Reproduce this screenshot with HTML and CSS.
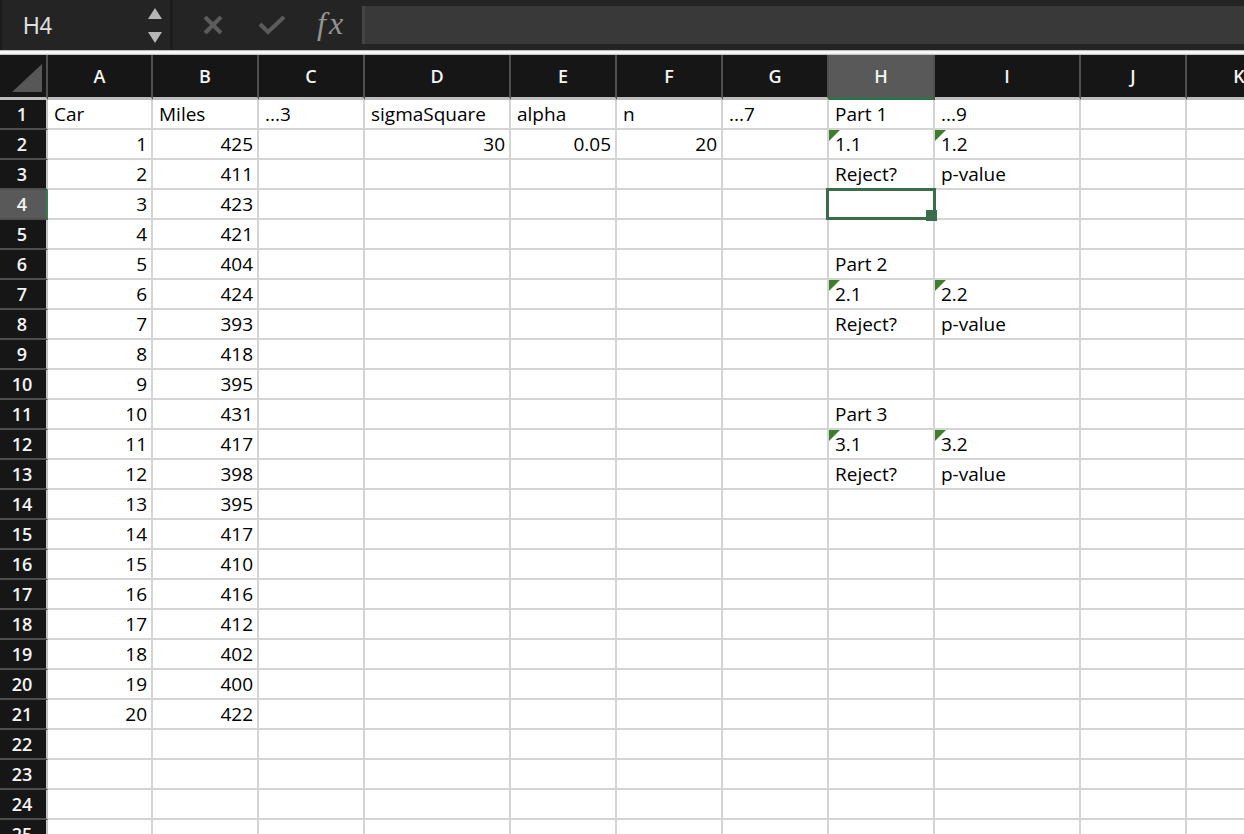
FILE: index.html
```html
<!DOCTYPE html>
<html lang="en">
<head>
<meta charset="UTF-8" />
<meta name="viewport" content="width=device-width, initial-scale=1" />
<title>Sheet1</title>
<link rel="stylesheet" href="styles.css">
</head>
<body>

<div class="toolbar">
  <div class="namebox">
    <span class="cellref">H4</span>
    <svg class="spinner" width="14" height="36" viewBox="0 0 14 36">
      <polygon points="0,11 7,0 14,11" />
      <polygon points="0,24 14,24 7,35" />
    </svg>
  </div>
  <div class="formula-tools">
    <svg class="tool-cancel" width="20" height="20" viewBox="0 0 20 20">
      <path d="M2 2 L18 18 M18 2 L2 18" />
    </svg>
    <svg class="tool-enter" width="28" height="20" viewBox="0 0 28 20">
      <path d="M2 9 L10 17 L26 2" />
    </svg>
    <span class="fx">fx</span>
  </div>
  <div class="formula-input"></div>
</div>
<div class="divider"></div>

<div class="sheet" id="sheet"></div>

<script>
  const sheet = document.getElementById('sheet');
  const cols = ['A', 'B', 'C', 'D', 'E', 'F', 'G', 'H', 'I', 'J', 'K'];
  const miles = [425, 411, 423, 421, 404, 424, 393, 418, 395, 431, 417, 398, 395, 417, 410, 416, 412, 402, 400, 422];

  const cells = {
    A1: 'Car', B1: 'Miles', C1: '...3', D1: 'sigmaSquare', E1: 'alpha', F1: 'n', G1: '...7', H1: 'Part 1', I1: '...9',
    D2: 30, E2: 0.05, F2: 20, H2: '1.1', I2: '1.2',
    H3: 'Reject?', I3: 'p-value',
    H6: 'Part 2', H7: '2.1', I7: '2.2', H8: 'Reject?', I8: 'p-value',
    H11: 'Part 3', H12: '3.1', I12: '3.2', H13: 'Reject?', I13: 'p-value'
  };
  miles.forEach((m, i) => {
    cells['A' + (i + 2)] = i + 1;
    cells['B' + (i + 2)] = m;
  });

  const notes = ['H2', 'I2', 'H7', 'I7', 'H12', 'I12'];
  const activeCol = 'H';
  const activeRow = 4;

  function div(cls, text) {
    const el = document.createElement('div');
    el.className = cls;
    if (text !== undefined) el.textContent = text;
    return el;
  }

  const corner = div('corner');
  corner.appendChild(div('corner-mark'));
  sheet.appendChild(corner);

  cols.forEach(c => {
    sheet.appendChild(div(c === activeCol ? 'col-head active' : 'col-head', c));
  });

  for (let r = 1; r <= 25; r++) {
    sheet.appendChild(div(r === activeRow ? 'row-head active' : 'row-head', r));
    cols.forEach(c => {
      const ref = c + r;
      const value = cells[ref];
      const cell = div(typeof value === 'number' ? 'cell num' : 'cell', value);
      if (notes.includes(ref)) cell.appendChild(div('note'));
      if (c === activeCol && r === activeRow) {
        const sel = div('selection');
        sel.appendChild(div('fill-handle'));
        cell.appendChild(sel);
      }
      sheet.appendChild(cell);
    });
  }
</script>

</body>
</html>
```

FILE: styles.css
```css
body {
  margin: 0;
  background: #fff;
  overflow: hidden;
  height: 834px;
}

/* formula bar */
.toolbar {
  height: 50px;
  background: #242424;
  display: flex;
  box-sizing: border-box;
  border-left: 2px solid #1b1b1b;
}
.namebox {
  width: 171px;
  box-sizing: border-box;
  border-right: 3px solid #1c1c1c;
  display: flex;
  align-items: center;
  justify-content: space-between;
  padding: 0 8px 0 21px;
}
.cellref {
  font-family: "Liberation Sans", Arial, sans-serif;
  font-size: 23px;
  color: #dedede;
  margin-top: 2px;
}
.spinner {
  fill: #b5b5b5;
  margin-top: 1px;
}
.formula-tools {
  width: 189px;
  display: flex;
  align-items: center;
}
.tool-cancel {
  margin-left: 30px;
  stroke: #5b5b5b;
  stroke-width: 4;
  fill: none;
}
.tool-enter {
  margin-left: 35px;
  stroke: #5b5b5b;
  stroke-width: 4;
  fill: none;
}
.fx {
  margin-left: 31px;
  font-family: "Liberation Serif", "Times New Roman", serif;
  font-style: italic;
  font-size: 32px;
  letter-spacing: 3px;
  color: #939393;
  margin-top: -3px;
}
.formula-input {
  flex: 1;
  margin: 6px 0;
  background: #393939;
  border-left: 3px solid #454545;
}
.divider {
  height: 5px;
  background: linear-gradient(#a8a8a8, #f4f4f4 30%, #fff 60%, #b4b4b4);
}

/* grid */
.sheet {
  display: grid;
  grid-template-columns: 48px 105px 106px 106px 146px 106px 106px 106px 106px 146px 106px 106px;
  grid-template-rows: 45px;
  grid-auto-rows: 30px;
  width: 1293px;
}
.corner,
.col-head {
  background: #161616;
  box-sizing: border-box;
  border-right: 2px solid #505050;
  border-bottom: 3px solid #bdbdbd;
}
.corner-mark {
  width: 30px;
  height: 28px;
  margin: 9px 0 0 12px;
  background: #575757;
  clip-path: polygon(100% 0, 100% 100%, 0 100%);
}
.col-head,
.row-head {
  font-family: "Open Sans", "Liberation Sans", sans-serif;
  font-weight: 600;
  font-size: 18px;
  color: #f4f4f4;
  text-align: center;
}
.col-head {
  line-height: 42px;
}
.col-head.active {
  background: #595959;
  border-bottom-color: #33704a;
}
.row-head {
  background: #161616;
  box-sizing: border-box;
  border-right: 2px solid #c4c4c4;
  border-bottom: 2px solid #4e4e4e;
  line-height: 28px;
  padding-right: 2px;
}
.row-head.active {
  background: #595959;
  border-right-color: #3b7a4e;
}
.cell {
  position: relative;
  box-sizing: border-box;
  border-right: 2px solid #d4d4d4;
  border-bottom: 2px solid #d4d4d4;
  padding: 0 5px 0 6px;
  font-family: "Open Sans", "Liberation Sans", sans-serif;
  font-size: 19px;
  line-height: 28px;
  color: #000;
  white-space: nowrap;
}
.cell.num {
  text-align: right;
  padding-right: 4px;
}
.note {
  position: absolute;
  top: 0;
  left: 0;
  width: 11px;
  height: 11px;
  background: #3f7e2d;
  clip-path: polygon(0 0, 100% 0, 0 100%);
}
.selection {
  position: absolute;
  top: -2px;
  left: -3px;
  right: -3px;
  bottom: -2px;
  border: 3px solid #3a6d49;
  z-index: 2;
}
.fill-handle {
  position: absolute;
  right: -4px;
  bottom: -4px;
  width: 11px;
  height: 11px;
  background: #3a6d49;
}
```
